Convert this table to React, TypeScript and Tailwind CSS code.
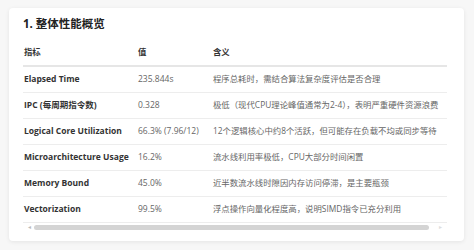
import React from "react";

const rows: [string, string, string][] = [
  ["Elapsed Time", "235.844s", "程序总耗时，需结合算法复杂度评估是否合理"],
  ["IPC (每周期指令数)", "0.328", "极低（现代CPU理论峰值通常为2-4），表明严重硬件资源浪费"],
  ["Logical Core Utilization", "66.3% (7.96/12)", "12个逻辑核心中约8个活跃，但可能存在负载不均或同步等待"],
  ["Microarchitecture Usage", "16.2%", "流水线利用率极低，CPU大部分时间闲置"],
  ["Memory Bound", "45.0%", "近半数流水线时隙因内存访问停滞，是主要瓶颈"],
  ["Vectorization", "99.5%", "浮点操作向量化程度高，说明SIMD指令已充分利用"],
];

export default function App() {
  return (
    <div
      className="w-[474px] h-[250px] bg-[#f7f7f7] pt-[8px] pl-[9px] pr-[10px] overflow-hidden"
      style={{ fontFamily: '"Open Sans", "Noto Sans CJK SC", sans-serif' }}
    >
      <div className="bg-white rounded-[4px] shadow-[0_1px_4px_rgba(0,0,0,0.08)] h-[233px] pl-[14px] pr-[17px] pt-[2px]">
        <h2 className="text-[11.5px] font-bold text-[#222] leading-[28px] h-[32px]">1. 整体性能概览</h2>
        <div className="w-[424px] overflow-hidden">
          <table className="w-[432px] border-collapse table-fixed text-[8.4px]">
            <colgroup>
              <col className="w-[115px]" />
              <col className="w-[75px]" />
              <col />
            </colgroup>
            <thead>
              <tr className="h-[24px] border-b-2 border-[#e6e6e6]">
                <th className="text-left font-semibold text-[#333] pl-[1px] pb-[2px]">指标</th>
                <th className="text-left font-semibold text-[#333] pb-[2px]">值</th>
                <th className="text-left font-semibold text-[#333] pb-[2px]">含义</th>
              </tr>
            </thead>
            <tbody>
              {rows.map((r) => (
                <tr key={r[0]} className="h-[26px] border-b border-[#ededed]">
                  <td className="pl-[1px] font-bold text-[#333] whitespace-nowrap text-[8.5px]">{r[0]}</td>
                  <td className="text-[#666] whitespace-nowrap text-[8.5px]">{r[1]}</td>
                  <td className="text-[#666] whitespace-nowrap">{r[2]}</td>
                </tr>
              ))}
            </tbody>
          </table>
          <div className="flex items-center h-[9px] gap-[3px] px-[5px]">
            <span className="text-[6px] leading-none text-[#bbb]">◂</span>
            <div className="flex-1 h-[5px] rounded-full bg-[#d4d4d4] mr-[7px]" />
            <span className="text-[6px] leading-none text-[#ddd]">▸</span>
          </div>
        </div>
      </div>
    </div>
  );
}
